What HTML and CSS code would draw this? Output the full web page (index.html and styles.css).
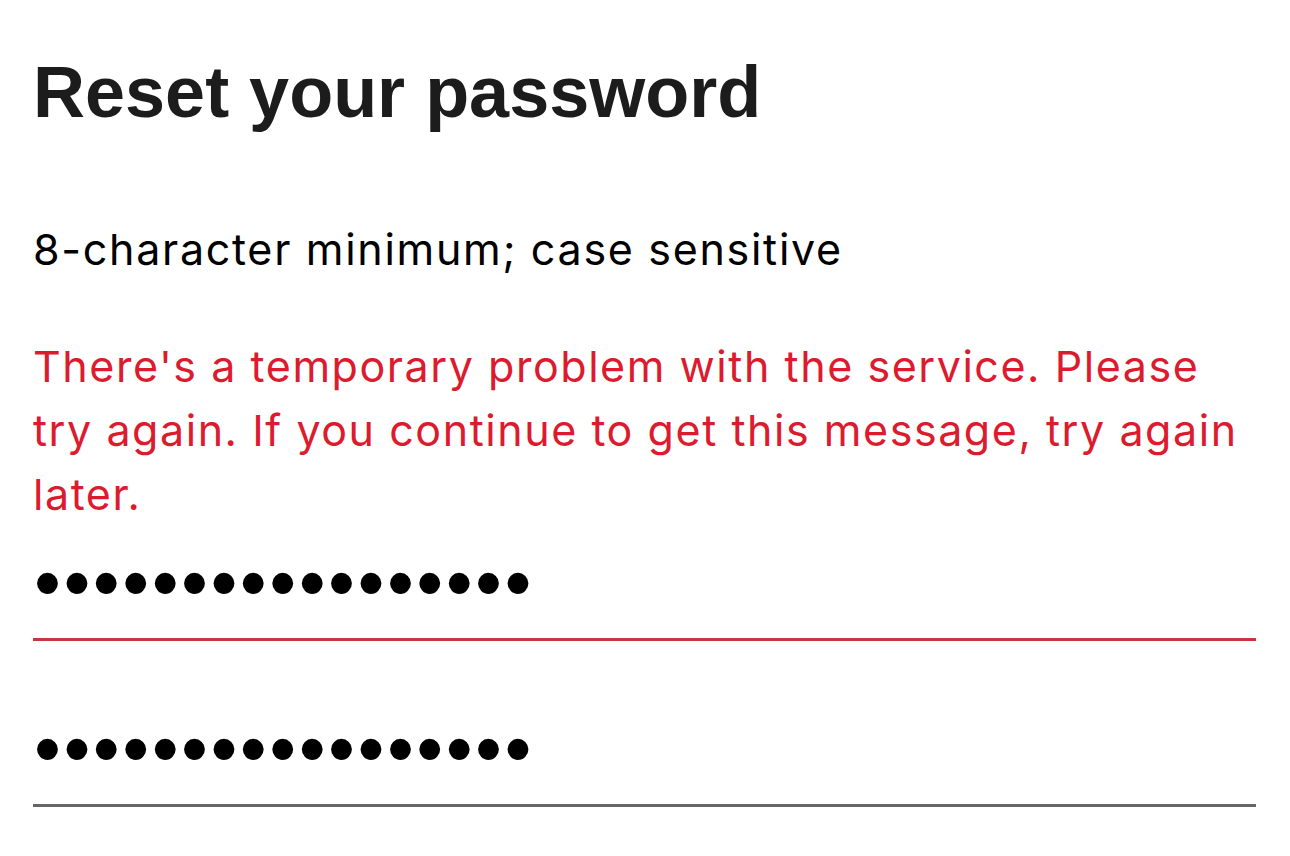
FILE: index.html
```html
<!DOCTYPE html>
<html lang="en">
<head>
<meta charset="utf-8">
<title>Reset your password</title>
<link rel="stylesheet" href="styles.css">
</head>
<body>
<main class="page">
  <h1 class="title">Reset your password</h1>
  <p class="hint">8-character minimum; case sensitive</p>
  <p class="error">There's a temporary problem with the service. Please try again. If you continue to get this message, try again later.</p>
  <div class="field field-error">
    <input class="pw" type="password" value="abcdefghijklmnopq" aria-label="New password">
  </div>
  <div class="field">
    <input class="pw" type="password" value="abcdefghijklmnopq" aria-label="Confirm password">
  </div>
</main>
</body>
</html>
```
FILE: styles.css
```css
html, body {
  margin: 0;
  padding: 0;
  background: #ffffff;
}
body {
  font-family: "Inter", "Liberation Sans", Arial, sans-serif;
}
.page {
  padding: 0 34px 0 33px;
}
.title {
  margin: 0;
  padding-top: 50px;
  font-family: "Liberation Sans", Arial, sans-serif;
  font-size: 72px;
  line-height: 84px;
  font-weight: 700;
  color: #1c1c1c;
}
.hint {
  margin: 0;
  margin-top: 90px;
  font-size: 43px;
  line-height: 50px;
  letter-spacing: 1.7px;
  color: #000000;
}
.error {
  margin: 0;
  margin-top: 60px;
  font-size: 43px;
  line-height: 64px;
  letter-spacing: 1.55px;
  color: #dc1b2e;
}
.field {
  border-bottom: 3px solid #666666;
}
.field-error {
  border-bottom-color: #c8363d;
}
.field + .field {
  margin-top: 51px;
}
.pw {
  display: block;
  width: 100%;
  height: 112px;
  margin: 0;
  box-sizing: border-box;
  border: 0;
  outline: none;
  background: transparent;
  padding: 0 0 0 1px;
  font-family: "Liberation Sans", Arial, sans-serif;
  font-size: 77px;
  letter-spacing: 2.45px;
  color: #000000;
}
```
